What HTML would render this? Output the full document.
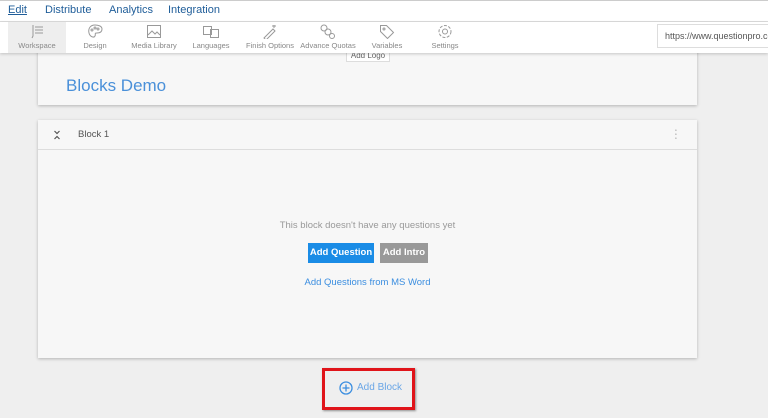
<!DOCTYPE html>
<html><head><style>
*{margin:0;padding:0;box-sizing:border-box}
body{width:768px;height:418px;overflow:hidden;background:#efefef;font-family:"Liberation Sans",sans-serif;position:relative}
.nav{position:absolute;top:0;left:0;width:768px;height:22px;background:#fff;border-top:1px solid #ccc;border-bottom:1px solid #ddd}
.nav span{position:absolute;top:3px;font-size:11px;color:#1f5d99}
.tb{position:absolute;top:22px;left:0;width:768px;height:31px;background:#fff;box-shadow:0 1px 3px rgba(0,0,0,.2);z-index:2}
.it{position:absolute;top:0;height:31px;width:58px;text-align:center;font-size:7.5px;color:#888}
.it svg{display:block;margin:2px auto 0}
.it div{margin-top:2px}
.card{position:absolute;left:38px;width:659px;background:#f7f7f7;box-shadow:0 1px 3px rgba(0,0,0,.25)}
.btn{position:absolute;top:243px;height:20px;color:#fff;font-size:9.5px;line-height:20px;text-align:center;font-weight:bold}
</style></head><body>
<div class="nav">
<span style="left:8px;text-decoration:underline">Edit</span>
<span style="left:45px">Distribute</span>
<span style="left:109px">Analytics</span>
<span style="left:168px">Integration</span>
</div>
<div class="tb">
<div class="it" style="left:8px;background:#eee"><svg width="16" height="15" viewBox="0 0 16 15" fill="none" stroke="#999"><path d="M4 1v11l-1 2M6 3h8M6 6h8M6 9h8"/></svg><div>Workspace</div></div>
<div class="it" style="left:66px"><svg width="16" height="15" viewBox="0 0 16 15" fill="none" stroke="#999"><path d="M8 1C3 1 1 5 2 9s5 5 6 3-1-3 2-3 5-1 5-4S11 1 8 1z"/><circle cx="5" cy="6" r="1"/><circle cx="8" cy="4" r="1"/><circle cx="11" cy="5" r="1"/></svg><div>Design</div></div>
<div class="it" style="left:125px"><svg width="16" height="15" viewBox="0 0 16 15" fill="none" stroke="#999"><rect x="1.5" y="1.5" width="13" height="12"/><path d="M2 11l4-4 3 3 2-2 3 3"/></svg><div>Media Library</div></div>
<div class="it" style="left:182px"><svg width="18" height="15" viewBox="0 0 18 15" fill="none" stroke="#999"><rect x="1.5" y="2.5" width="8" height="8"/><rect x="8.5" y="5.5" width="8" height="8"/></svg><div>Languages</div></div>
<div class="it" style="left:241px"><svg width="16" height="15" viewBox="0 0 16 15" fill="none" stroke="#999"><path d="M2 14l9-9 2 2-9 9zM12 1v3M10 2h4"/></svg><div>Finish Options</div></div>
<div class="it" style="left:299px"><svg width="16" height="15" viewBox="0 0 16 15" fill="none" stroke="#999"><circle cx="4" cy="4" r="3"/><circle cx="8" cy="8" r="3"/><circle cx="12" cy="12" r="2.5"/></svg><div>Advance Quotas</div></div>
<div class="it" style="left:358px"><svg width="16" height="15" viewBox="0 0 16 15" fill="none" stroke="#999"><path d="M1.5 1.5h6l7 7-6 6-7-7z"/><circle cx="5" cy="5" r="1"/></svg><div>Variables</div></div>
<div class="it" style="left:416px"><svg width="16" height="15" viewBox="0 0 16 15" fill="none" stroke="#999"><circle cx="8" cy="7.5" r="2.5"/><circle cx="8" cy="7.5" r="6" stroke-dasharray="3 1.5"/></svg><div>Settings</div></div>
<div style="position:absolute;left:657px;top:2px;width:115px;height:24px;border:1px solid #ddd;font-size:9px;color:#555;padding:6px 0 0 7px;white-space:nowrap;overflow:hidden">https://www.questionpro.co</div>
</div>
<div class="card" style="top:40px;height:65px">
<div style="position:absolute;left:308px;top:10px;width:44px;height:12px;border:1px solid #ddd;background:#fff;font-size:8px;color:#666;text-align:center;line-height:9px;overflow:hidden">Add Logo</div>
<div style="position:absolute;left:28px;top:36px;font-size:17px;color:#4a90d9">Blocks Demo</div>
</div>
<div class="card" style="top:120px;height:238px">
<div style="height:30px;border-bottom:1px solid #ddd;position:relative">
<svg style="position:absolute;left:15px;top:10px" width="8" height="10" viewBox="0 0 8 10" fill="none" stroke="#555" stroke-width="1.2"><path d="M1.5 1l2.5 2.5L6.5 1M1.5 9l2.5-2.5L6.5 9"/></svg>
<div style="position:absolute;left:40px;top:9px;font-size:9.5px;color:#555">Block 1</div>
<div style="position:absolute;left:637px;top:8px;width:3px;font-size:3px;line-height:4px;color:#999">●<br>●<br>●</div>
</div>
<div style="position:absolute;top:100px;width:100%;text-align:center;font-size:9.5px;color:#999">This block doesn't have any questions yet</div>
<div style="position:absolute;top:157px;width:100%;text-align:center;font-size:9.5px;color:#3b8ee0">Add Questions from MS Word</div>
</div>
<div class="btn" style="left:308px;width:66px;background:#1a8ce6">Add Question</div>
<div class="btn" style="left:380px;width:48px;background:#999">Add Intro</div>
<div style="position:absolute;left:322px;top:368px;width:93px;height:42px;border:3px solid #e0141a;box-shadow:1px 1px 2px rgba(0,0,0,.4)"></div>
<svg style="position:absolute;left:339px;top:381px" width="14" height="14" viewBox="0 0 14 14" fill="none" stroke="#3b8ee0" stroke-width="1.3"><circle cx="7" cy="7" r="6"/><path d="M7 3.5v7M3.5 7h7"/></svg>
<div style="position:absolute;left:357px;top:382px;font-size:10px;color:#6aa6e6">Add Block</div>
</body></html>
